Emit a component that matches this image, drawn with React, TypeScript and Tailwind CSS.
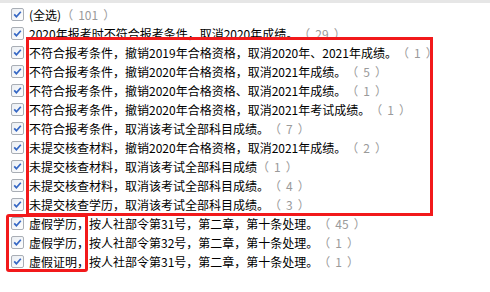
const items: { label: string; count: number }[] = [
  { label: '(全选)', count: 101 },
  { label: '2020年报考时不符合报考条件，取消2020年成绩。', count: 29 },
  { label: '不符合报考条件，撤销2019年合格资格，取消2020年、2021年成绩。', count: 1 },
  { label: '不符合报考条件，撤销2020年合格资格，取消2021年成绩。', count: 5 },
  { label: '不符合报考条件，撤销2020年合格资格、取消2021年成绩。', count: 1 },
  { label: '不符合报考条件，撤销2020年合格资格，取消2021年考试成绩。', count: 1 },
  { label: '不符合报考条件，取消该考试全部科目成绩。', count: 7 },
  { label: '未提交核查材料，撤销2020年合格资格，取消2021年成绩。', count: 2 },
  { label: '未提交核查材料，取消该考试全部科目成绩', count: 1 },
  { label: '未提交核查材料，取消该考试全部科目成绩。', count: 4 },
  { label: '未提交核查学历，取消该考试全部科目成绩。', count: 3 },
  { label: '虚假学历，按人社部令第31号，第二章，第十条处理。', count: 45 },
  { label: '虚假学历，按人社部令第32号，第二章，第十条处理。', count: 1 },
  { label: '虚假证明，按人社部令第31号，第二章，第十条处理。', count: 1 },
];

function CheckBox() {
  return (
    <svg width="13" height="13" viewBox="0 0 13 13" className="shrink-0">
      <defs>
        <linearGradient id="cbg" x1="0" y1="0" x2="1" y2="1">
          <stop offset="0" stopColor="#e9edf2" />
          <stop offset="1" stopColor="#ffffff" />
        </linearGradient>
      </defs>
      <rect x="0.5" y="0.5" width="12" height="12" rx="1.5" fill="url(#cbg)" stroke="#a9aeb5" />
      <path d="M3.2 6.4 L5.4 8.7 L9.8 3.8" fill="none" stroke="#3567c4" strokeWidth="1.7" />
    </svg>
  );
}

export default function App() {
  return (
    <div
      className="relative w-[490px] h-[292px] bg-white overflow-hidden text-[12px] text-black"
      style={{ fontFamily: '"Noto Sans CJK SC", "Noto Sans", sans-serif' }}
    >
      <div className="h-[3px] w-full bg-[#e6e6e6]" />

      {/* 列表 */}
      <div className="pt-[2px]">
        {items.map((item, i) => (
          <div key={i} className="flex items-center h-[19px] pl-[11px]">
            <CheckBox />
            <span className="ml-[5px] whitespace-nowrap leading-none">{item.label}</span>
            <span className="whitespace-nowrap leading-none text-[#9a9a9a]">
              （<span className="px-[5px]">{item.count}</span>）
            </span>
          </div>
        ))}
      </div>

      {/* 红框标注 */}
      <div className="absolute left-[26px] top-[37px] w-[407px] h-[179px] border-[3px] border-[#f2191b]" />
      <div className="absolute left-[6px] top-[214px] w-[82px] h-[58px] border-[3px] border-[#f2191b] rounded-[3px]" />
    </div>
  );
}
